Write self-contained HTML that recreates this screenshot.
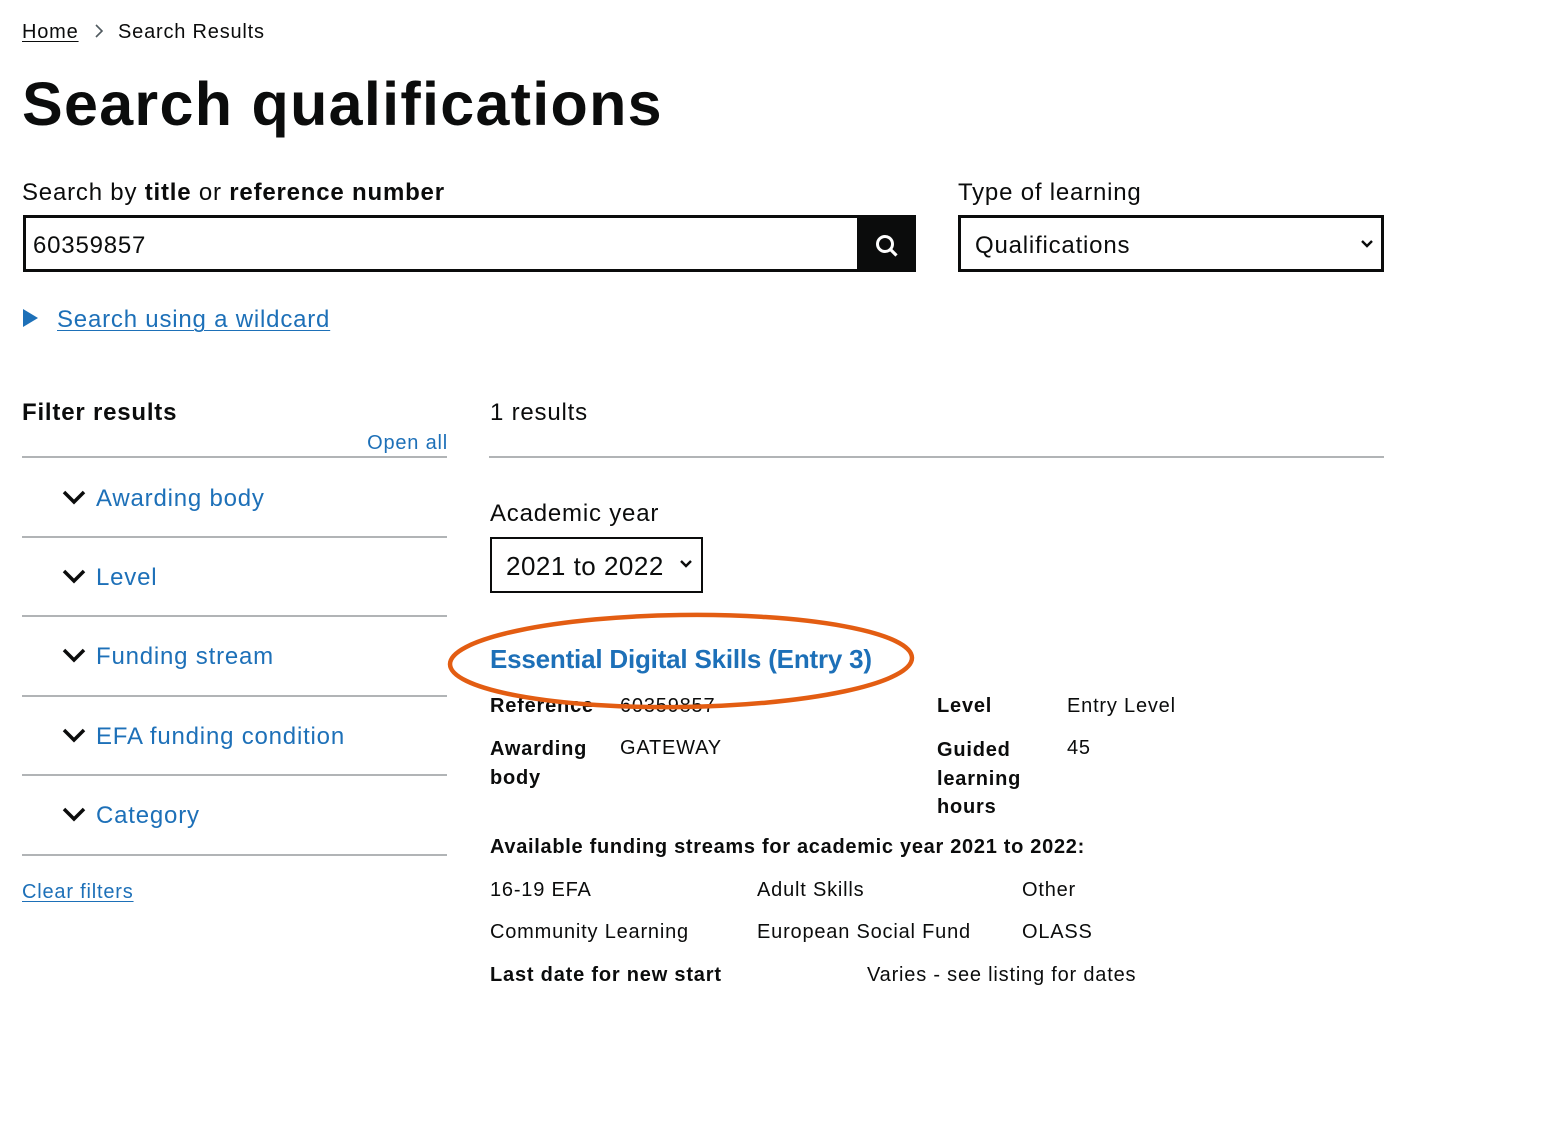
<!DOCTYPE html>
<html><head><meta charset="utf-8"><style>
*{margin:0;padding:0;box-sizing:border-box}
body{width:1568px;height:1125px;background:#fff;position:relative;overflow:hidden;font-family:"Liberation Sans",Arial,sans-serif;color:#0b0c0c}
.a{position:absolute;white-space:nowrap}
.b{color:#1d70b8}
.u{text-decoration:underline;text-decoration-thickness:1px;text-underline-offset:3px}
.hr{position:absolute;height:2px;background:#b1b4b6}
.box{position:absolute;border:3px solid #0b0c0c}
.t20{font-size:20px;line-height:26px;letter-spacing:0.8px}
.t24{font-size:24px;line-height:33px;letter-spacing:0.8px}
.bold{font-weight:bold}
</style></head><body>
<div class="a t20 u" style="left:22px;top:19px;color:#0b0c0c">Home</div>
<svg class="a" style="left:92px;top:23px" width="14" height="16" viewBox="0 0 14 16"><path d="M4 2l6 6-6 6" fill="none" stroke="#505a5f" stroke-width="1.6"/></svg>
<div class="a t20" style="left:118px;top:19px">Search Results</div>
<div class="a bold" style="left:22px;top:69px;font-size:61px;line-height:70px;letter-spacing:1.3px">Search qualifications</div>

<div class="a t24" style="left:22px;top:176px">Search by <b>title</b> or <b>reference number</b></div>
<div class="box" style="left:23px;top:215px;width:893px;height:57px"></div>
<div class="a" style="left:857px;top:215px;width:59px;height:57px;background:#0b0c0c"></div>
<svg class="a" style="left:874px;top:233px" width="26" height="26" viewBox="0 0 26 26"><circle cx="11" cy="11" r="7.5" fill="none" stroke="#fff" stroke-width="3"/><path d="M16.5 16.5l6 6" stroke="#fff" stroke-width="3.2"/></svg>
<div class="a t24" style="left:33px;top:229px">60359857</div>

<div class="a t24" style="left:958px;top:176px">Type of learning</div>
<div class="box" style="left:958px;top:215px;width:426px;height:57px"></div>
<div class="a t24" style="left:975px;top:229px">Qualifications</div>
<svg class="a" style="left:1360px;top:238px" width="14" height="12" viewBox="0 0 14 12"><path d="M2 3l5 5 5-5" fill="none" stroke="#0b0c0c" stroke-width="2.4"/></svg>

<svg class="a" style="left:22px;top:308px" width="18" height="20" viewBox="0 0 18 20"><path d="M1 1l15 9-15 9z" fill="#1d70b8"/></svg>
<div class="a t24 b u" style="left:57px;top:303px">Search using a wildcard</div>

<div class="a t24 bold" style="left:22px;top:396px">Filter results</div>
<div class="a t20 b" style="right:1120px;top:430px">Open all</div>
<div class="hr" style="left:22px;top:456px;width:425px"></div>
<div class="hr" style="left:22px;top:536px;width:425px"></div>
<div class="hr" style="left:22px;top:615px;width:425px"></div>
<div class="hr" style="left:22px;top:695px;width:425px"></div>
<div class="hr" style="left:22px;top:774px;width:425px"></div>
<div class="hr" style="left:22px;top:854px;width:425px"></div>

<svg class="a" style="left:61px;top:488px" width="26" height="18" viewBox="0 0 26 18"><path d="M3 4l10 10 10-10" fill="none" stroke="#0b0c0c" stroke-width="3.5"/></svg>
<div class="a t24 b" style="left:96px;top:482px">Awarding body</div>
<svg class="a" style="left:61px;top:567px" width="26" height="18" viewBox="0 0 26 18"><path d="M3 4l10 10 10-10" fill="none" stroke="#0b0c0c" stroke-width="3.5"/></svg>
<div class="a t24 b" style="left:96px;top:561px">Level</div>
<svg class="a" style="left:61px;top:646px" width="26" height="18" viewBox="0 0 26 18"><path d="M3 4l10 10 10-10" fill="none" stroke="#0b0c0c" stroke-width="3.5"/></svg>
<div class="a t24 b" style="left:96px;top:640px">Funding stream</div>
<svg class="a" style="left:61px;top:726px" width="26" height="18" viewBox="0 0 26 18"><path d="M3 4l10 10 10-10" fill="none" stroke="#0b0c0c" stroke-width="3.5"/></svg>
<div class="a t24 b" style="left:96px;top:720px">EFA funding condition</div>
<svg class="a" style="left:61px;top:805px" width="26" height="18" viewBox="0 0 26 18"><path d="M3 4l10 10 10-10" fill="none" stroke="#0b0c0c" stroke-width="3.5"/></svg>
<div class="a t24 b" style="left:96px;top:799px">Category</div>
<div class="a t20 b u" style="left:22px;top:879px">Clear filters</div>

<div class="a t24" style="left:490px;top:396px">1 results</div>
<div class="hr" style="left:489px;top:456px;width:895px"></div>
<div class="a t24" style="left:490px;top:497px">Academic year</div>
<div class="box" style="left:490px;top:537px;width:213px;height:56px;border-width:2.5px"></div>
<div class="a" style="left:506px;top:551px;font-size:26px;line-height:30px;letter-spacing:0.5px">2021 to 2022</div>
<svg class="a" style="left:679px;top:558px" width="14" height="12" viewBox="0 0 14 12"><path d="M2 3l5 5 5-5" fill="none" stroke="#0b0c0c" stroke-width="2.4"/></svg>

<div class="a bold b" style="left:490px;top:643px;font-size:26px;line-height:32px;letter-spacing:-0.2px">Essential Digital Skills (Entry 3)</div>
<div class="a t20 bold" style="left:490px;top:693px">Reference</div>
<div class="a t20" style="left:620px;top:693px">60359857</div>
<div class="a t20 bold" style="left:937px;top:693px">Level</div>
<div class="a t20" style="left:1067px;top:693px">Entry Level</div>
<div class="a t20 bold" style="left:490px;top:735px;line-height:29px">Awarding<br>body</div>
<div class="a t20" style="left:620px;top:735px">GATEWAY</div>
<div class="a t20 bold" style="left:937px;top:736px;line-height:28.5px">Guided<br>learning<br>hours</div>
<div class="a t20" style="left:1067px;top:735px">45</div>
<div class="a t20 bold" style="left:490px;top:834px;letter-spacing:0.7px">Available funding streams for academic year 2021 to 2022:</div>
<div class="a t20" style="left:490px;top:877px">16-19 EFA</div>
<div class="a t20" style="left:757px;top:877px">Adult Skills</div>
<div class="a t20" style="left:1022px;top:877px">Other</div>
<div class="a t20" style="left:490px;top:919px">Community Learning</div>
<div class="a t20" style="left:757px;top:919px">European Social Fund</div>
<div class="a t20" style="left:1022px;top:919px">OLASS</div>
<div class="a t20 bold" style="left:490px;top:962px">Last date for new start</div>
<div class="a t20" style="left:867px;top:962px">Varies - see listing for dates</div>

<svg class="a" style="left:0;top:0" width="1568" height="1125"><ellipse cx="681" cy="661" rx="231" ry="46" fill="none" stroke="#e35d12" stroke-width="4.5" transform="rotate(-0.8 681 661)"/></svg>
</body></html>
